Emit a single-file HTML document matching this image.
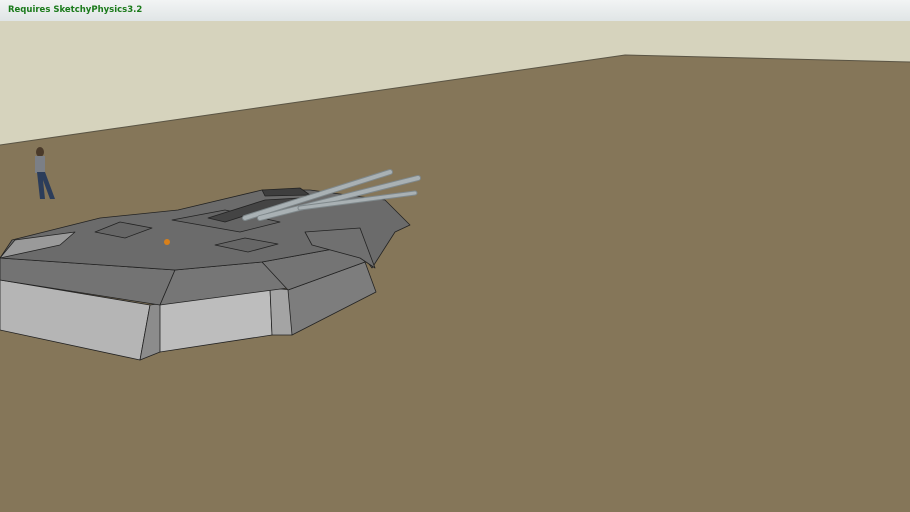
<!DOCTYPE html>
<html><head><style>
body{margin:0;width:910px;height:512px;overflow:hidden;font-family:"DejaVu Sans","Liberation Sans",sans-serif}
.hdr{position:absolute;left:0;top:0;width:910px;height:21px;background:linear-gradient(#f2f4f4,#e0e5e6);}
.hdr span{position:absolute;left:8px;top:5px;font-size:8.5px;font-weight:bold;color:#1a7a1a}
svg{position:absolute;left:0;top:0}
</style></head><body>
<svg width="910" height="512" viewBox="0 0 910 512">
<rect width="910" height="512" fill="#d6d3bd"/>
<polygon points="0,145 625,55 910,62 910,512 0,512" fill="#857659"/>
<polyline points="0,145 625,55 910,62" fill="none" stroke="#5a5444" stroke-width="1"/>
<g stroke="#222" stroke-width="0.8" stroke-linejoin="round">
<polygon points="0,280 150,305 140,360 0,330" fill="#b5b5b5"/>
<polygon points="150,305 165,303 160,352 140,360" fill="#8c8c8c"/>
<polygon points="160,303 270,288 272,335 160,352" fill="#bdbdbd"/>
<polygon points="270,288 292,290 292,335 272,335" fill="#a4a4a4"/>
<polygon points="288,290 365,262 376,292 292,335" fill="#7d7d7d"/>
<polygon points="0,258 175,270 160,305 0,280" fill="#737373"/>
<polygon points="175,270 262,262 288,288 160,305" fill="#767676"/>
<polygon points="262,262 355,245 365,262 288,290" fill="#747474"/>
<polygon points="0,258 12,240 100,218 178,210 262,190 310,190 385,200 410,225 395,232 372,268 355,245 262,262 175,270" fill="#6b6b6b"/>
<polygon points="305,232 360,228 375,268 360,258 312,245" fill="#707070"/>
<polygon points="0,258 15,240 75,232 60,245" fill="#9a9a9a"/>
<polygon points="95,232 120,222 152,228 125,238" fill="#666"/>
<polygon points="215,245 245,238 278,244 248,252" fill="#666"/>
<polygon points="172,220 225,210 280,222 240,232" fill="#656565"/>
<polygon points="208,218 265,200 300,198 225,222" fill="#444"/>
<polygon points="262,190 300,188 310,195 265,196" fill="#3e3e3e"/>
</g>
<g stroke-linecap="round">
<line x1="245" y1="218" x2="390" y2="172" stroke="#7f888b" stroke-width="6"/>
<line x1="245" y1="218" x2="390" y2="172" stroke="#a9b1b4" stroke-width="4"/>
<line x1="260" y1="218" x2="418" y2="178" stroke="#7f888b" stroke-width="6"/>
<line x1="260" y1="218" x2="418" y2="178" stroke="#a9b1b4" stroke-width="4"/>
<line x1="300" y1="208" x2="415" y2="193" stroke="#7f888b" stroke-width="5"/>
<line x1="300" y1="208" x2="415" y2="193" stroke="#a9b1b4" stroke-width="3"/>
</g>
<circle cx="167" cy="242" r="3" fill="#d9801a"/>
<ellipse cx="40" cy="152" rx="4" ry="5" fill="#4a3a2a"/>
<rect x="35" y="156" width="10" height="17" fill="#7b7f86"/>
<polygon points="37,172 45,172 55,199 50,199 43,180 45,199 40,199" fill="#2c3d5a"/>
</svg>
<div class="hdr"><span>Requires SketchyPhysics3.2</span></div>
</body></html>
